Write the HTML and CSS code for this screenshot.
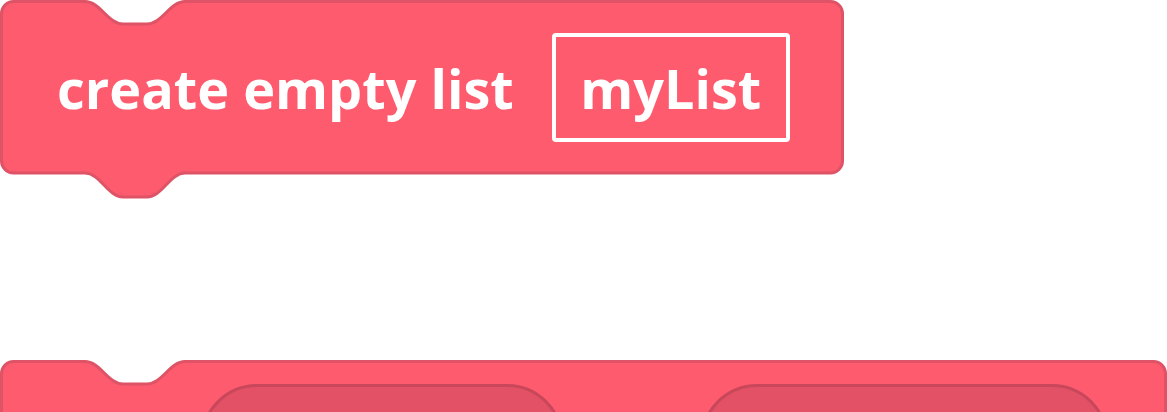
FILE: index.html
```html
<!DOCTYPE html>
<html>
<head>
<meta charset="utf-8">
<link rel="stylesheet" href="styles.css">
</head>
<body>
<div class="canvas">
  <div class="block block-one">
    <svg class="block-shape" width="846" height="201" viewBox="0 0 846 201">
      <path d="M 1.5,13.5 a12,12 0 0 1 12,-12 H 85 c 15,0 23,22.5 38,22.5 h 24 c 15,0 23,-22.5 38,-22.5 H 830.5 a12,12 0 0 1 12,12 V 161 a12,12 0 0 1 -12,12 H 185 c -15,0 -23,24 -38,24 h -24 c -15,0 -23,-24 -38,-24 H 13.5 a12,12 0 0 1 -12,-12 Z"/>
    </svg>
    <div class="block-row">
      <span class="label">create empty list</span>
      <span class="field">myList</span>
    </div>
  </div>
  <div class="block block-two">
    <svg class="block-shape" width="1167" height="53" viewBox="0 0 1167 53">
      <path d="M 1.5,120 V 13.5 a12,12 0 0 1 12,-12 H 85 c 15,0 23,22.5 38,22.5 h 24 c 15,0 23,-22.5 38,-22.5 H 1153.5 a12,12 0 0 1 12,12 V 120 Z"/>
      <rect class="slot" x="202" y="25.5" width="360" height="110" rx="55" ry="55"/>
      <rect class="slot" x="702" y="25.5" width="405" height="110" rx="55" ry="55"/>
    </svg>
  </div>
</div>
</body>
</html>
```
FILE: styles.css
```css
html, body {
  margin: 0;
  padding: 0;
  background: #ffffff;
  overflow: hidden;
}

.canvas {
  width: 1167px;
  height: 412px;
  display: flex;
  flex-direction: column;
  gap: 159px;
}

.block {
  position: relative;
  flex: none;
}

.block-one {
  width: 846px;
  height: 201px;
}

.block-two {
  width: 1167px;
  height: 53px;
  overflow: hidden;
}

.block-shape {
  position: absolute;
  left: 0;
  top: 0;
  display: block;
}

.block-shape path {
  fill: #ff5b6e;
  stroke: #df5367;
  stroke-width: 3;
}

.block-shape .slot {
  fill: #e25166;
  stroke: #c9475b;
  stroke-width: 3;
}

.block-row {
  position: relative;
  height: 175px;
  display: flex;
  align-items: center;
  padding-left: 57px;
  gap: 38px;
  font-family: "Open Sans", "Noto Sans", sans-serif;
  font-weight: 700;
  font-size: 54px;
  color: #ffffff;
}

.label {
  white-space: nowrap;
  line-height: 1;
}

.field {
  box-sizing: border-box;
  width: 238px;
  height: 109px;
  border: 4px solid #ffffff;
  border-radius: 4px;
  display: flex;
  align-items: center;
  justify-content: center;
  line-height: 1;
}
```
